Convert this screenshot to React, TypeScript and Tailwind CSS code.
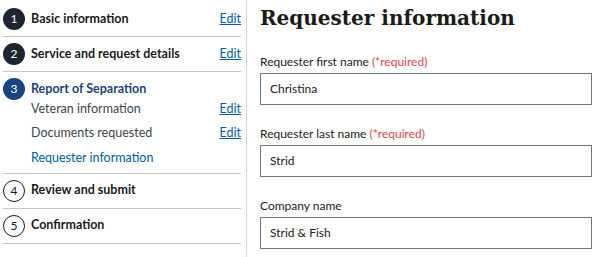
import React from 'react'

type Step = { n: number; title: string; state: 'done' | 'current' | 'todo'; edit?: boolean }

const STEPS: Step[] = [
  { n: 1, title: 'Basic information', state: 'done', edit: true },
  { n: 2, title: 'Service and request details', state: 'done', edit: true },
  { n: 3, title: 'Report of Separation', state: 'current' },
  { n: 4, title: 'Review and submit', state: 'todo' },
  { n: 5, title: 'Confirmation', state: 'todo' },
]

const SUB_ITEMS = [
  { label: 'Veteran information', edit: true },
  { label: 'Documents requested', edit: true },
  { label: 'Requester information', active: true },
]

function Circle({ n, state }: { n: number; state: Step['state'] }) {
  if (state === 'todo')
    return (
      <span className="w-[22px] h-[22px] rounded-full border-[1.5px] border-[#1b1b1b] flex items-center justify-center text-[12px] text-[#1b1b1b] flex-shrink-0">
        {n}
      </span>
    )
  const bg = state === 'current' ? 'bg-[#1a4480]' : 'bg-[#1c2530]'
  return (
    <span className={`w-[22px] h-[22px] rounded-full ${bg} flex items-center justify-center text-[12px] text-white flex-shrink-0`}>
      {n}
    </span>
  )
}

function Field({ label, required, value }: { label: string; required?: boolean; value: string }) {
  return (
    <div className="flex flex-col">
      <label className="text-[12px] leading-[16px] text-[#1b1b1b]">
        {label}
        {required && <span className="text-[#e0464a]"> (*required)</span>}
      </label>
      <div className="mt-[3px] h-[32px] border border-[#71767a] flex items-center px-[9px] text-[12px] text-[#1b1b1b]">
        {value}
      </div>
    </div>
  )
}

export default function App() {
  return (
    <div className="w-[600px] h-[257px] bg-white flex overflow-hidden" style={{ fontFamily: 'Lato, "Open Sans", sans-serif' }}>
      {/* 左: ステップ */}
      <div className="w-[247px] pl-[3px] pr-[5px] pt-[2px] border-r border-[#d6d7d9]">
        {STEPS.map((s) => (
          <div key={s.n} className="border-b border-[#c6c7c9]">
            {s.state === 'current' ? (
              <>
                <div className="h-[24px] mt-[5px] flex items-center gap-[6px]">
                  <Circle n={s.n} state={s.state} />
                  <span className="flex-1 text-[12.5px] font-bold text-[#1a4480]">{s.title}</span>
                </div>
                <div className="pl-[28px] -mt-[4px] pb-[2px]">
                  {SUB_ITEMS.map((it) => (
                    <div key={it.label} className="h-[24.5px] flex items-center">
                      <span className={`flex-1 text-[12.5px] ${it.active ? 'text-[#005ea2]' : 'text-[#3d4551]'}`}>{it.label}</span>
                      {it.edit && <a className="text-[12.5px] text-[#005ea2] underline">Edit</a>}
                    </div>
                  ))}
                </div>
              </>
            ) : (
              <div className="h-[34px] flex items-center gap-[6px]">
                <Circle n={s.n} state={s.state} />
                <span className="flex-1 text-[12.5px] font-bold text-[#1b1b1b]">{s.title}</span>
                {s.edit && <a className="text-[12.5px] text-[#005ea2] underline">Edit</a>}
              </div>
            )}
          </div>
        ))}
      </div>

      {/* 右: フォーム */}
      <div className="flex-1 pl-[13px] pr-[8px] pt-[3px]">
        <h1 className="text-[20px] font-bold text-[#1b1b1b] leading-[30px]" style={{ fontFamily: '"DejaVu Serif", serif' }}>
          Requester information
        </h1>
        <div className="mt-[21px] flex flex-col gap-[21px]">
          <Field label="Requester first name" required value="Christina" />
          <Field label="Requester last name" required value="Strid" />
          <Field label="Company name" value="Strid & Fish" />
        </div>
      </div>
    </div>
  )
}
